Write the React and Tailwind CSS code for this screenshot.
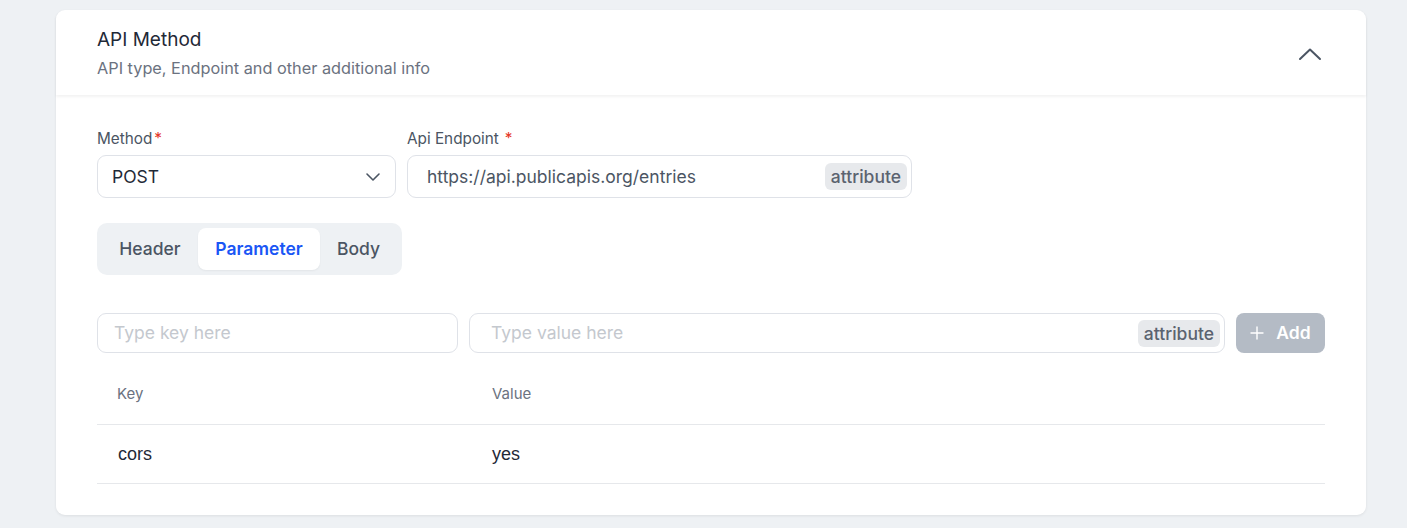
import React from "react";

const inter = { fontFamily: "Inter, 'Noto Sans', sans-serif" };
const arial = { fontFamily: "'Liberation Sans', Arial, sans-serif" };

function Attr() {
  return (
    <span className="shrink-0 rounded-[6px] bg-[#e7e9ec] px-[6px] py-[2px] text-[17.5px] font-medium leading-[23px] text-[#5b6370]">
      attribute
    </span>
  );
}

export default function App() {
  return (
    <div className="min-h-[528px] w-full bg-[#eef1f4] pt-[10px]" style={inter}>
      <div className="ml-[56px] w-[1310px] rounded-[9px] bg-white shadow-[0_1px_3px_rgba(0,0,0,0.08)]">
        {/* header */}
        <div className="flex h-[85px] items-center justify-between rounded-t-[9px] pl-[41px] pr-[44px] shadow-[0_2px_3px_rgba(0,0,0,0.05)]">
          <div className="flex flex-col">
            <div className="text-[19px] font-normal leading-[24px] text-[#1f2937]">API Method</div>
            <div className="mt-[6px] text-[16.3px] leading-[20px] text-[#6b7280]">API type, Endpoint and other additional info</div>
          </div>
          <svg width="24" height="14" viewBox="0 0 24 14" fill="none" className="mt-[2px]">
            <path d="M2 12 L12 2.5 L22 12" stroke="#4b5563" strokeWidth="2" strokeLinecap="round" strokeLinejoin="round" />
          </svg>
        </div>

        <div className="pl-[41px] pr-[41px] pb-[31px] pt-[34px]">
          {/* method + endpoint */}
          <div className="flex gap-[11px]">
            <div className="flex w-[299px] flex-col">
              <div className="flex items-center text-[15.3px] leading-[20px] text-[#4b5563]">
                Method<span className="ml-[2px] text-[#e5341e]">*</span>
              </div>
              <div className="mt-[6px] flex h-[43px] items-center justify-between rounded-[9px] border border-[#dfe2e8] pl-[14px] pr-[14px]">
                <span className="text-[17.5px] leading-[22px] text-[#1f2937]">POST</span>
                <svg width="16" height="10" viewBox="0 0 16 10" fill="none">
                  <path d="M2 2 L8 8 L14 2" stroke="#4b5563" strokeWidth="1.6" strokeLinecap="round" strokeLinejoin="round" />
                </svg>
              </div>
            </div>
            <div className="flex w-[505px] flex-col">
              <div className="flex items-center text-[15.3px] leading-[20px] text-[#4b5563]">
                Api Endpoint<span className="ml-[6px] text-[#e5341e]">*</span>
              </div>
              <div className="mt-[6px] flex h-[43px] items-center justify-between rounded-[9px] border border-[#dfe2e8] pl-[19px] pr-[4px]">
                <span className="text-[17.5px] leading-[22px] text-[#4b5563]">https://api.publicapis.org/entries</span>
                <Attr />
              </div>
            </div>
          </div>

          {/* tabs */}
          <div className="mt-[25px] flex h-[52px] w-[305px] items-center rounded-[10px] bg-[#eef1f4] px-[5px]">
            <div className="flex h-[42px] w-[96px] items-center justify-center text-[17.5px] font-medium text-[#4b5563]">Header</div>
            <div className="flex h-[42px] w-[122px] items-center justify-center rounded-[8px] bg-white text-[17.5px] font-semibold text-[#1a56f5] shadow-[0_1px_2px_rgba(0,0,0,0.05)]">Parameter</div>
            <div className="flex h-[42px] w-[77px] items-center justify-center text-[17.5px] font-medium text-[#4b5563]">Body</div>
          </div>

          {/* key/value inputs */}
          <div className="mt-[38px] flex gap-[11px]">
            <div className="flex h-[40px] w-[361px] shrink-0 items-center rounded-[9px] border border-[#dfe2e8] pl-[16px]">
              <span className="text-[17.5px] text-[#c4c8ce]">Type key here</span>
            </div>
            <div className="flex h-[40px] flex-1 items-center justify-between rounded-[9px] border border-[#dfe2e8] pl-[21px] pr-[4px]">
              <span className="text-[17.5px] text-[#c4c8ce]">Type value here</span>
              <Attr />
            </div>
            <div className="flex h-[40px] w-[89px] shrink-0 items-center justify-center gap-[12px] rounded-[8px] bg-[#b4bbc5] text-[17.5px] font-semibold text-white">
              <svg width="14" height="14" viewBox="0 0 14 14" fill="none">
                <path d="M7 1 V13 M1 7 H13" stroke="white" strokeWidth="1.4" strokeLinecap="round" />
              </svg>
              Add
            </div>
          </div>

          {/* table */}
          <div className="mt-[12px]">
            <div className="flex h-[60px] items-center border-b border-[#e6e8eb] text-[15px] text-[#6b7280]">
              <div className="w-[375px] pl-[20px]">Key</div>
              <div className="pl-[20px]">Value</div>
            </div>
            <div className="flex h-[59px] items-center border-b border-[#e6e8eb] text-[18px] text-[#1f2937]" style={arial}>
              <div className="w-[375px] pl-[21px]">cors</div>
              <div className="pl-[20px]">yes</div>
            </div>
          </div>
        </div>
      </div>
    </div>
  );
}
